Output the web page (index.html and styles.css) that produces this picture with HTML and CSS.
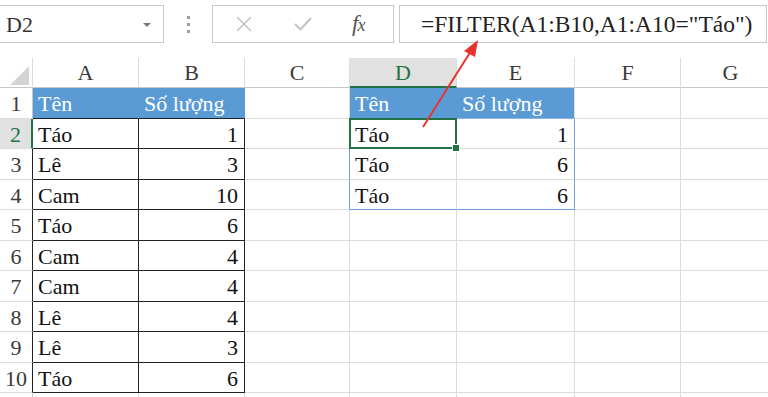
FILE: index.html
```html
<!DOCTYPE html>
<html lang="vi">
<head>
<meta charset="utf-8">
<title>FILTER</title>
<link rel="stylesheet" href="styles.css">
</head>
<body>
<div class="app">
  <div class="fbar">
    <div class="namebox"><span class="nb-text">D2</span><span class="caret"></span></div>
    <div class="dots"><i></i><i></i><i></i></div>
    <div class="fnbox">
      <svg class="ico" width="18" height="18" viewBox="0 0 18 18"><path d="M2 2 L16 16 M16 2 L2 16" stroke="#c4c4c4" stroke-width="1.6" fill="none"/></svg>
      <svg class="ico" width="20" height="18" viewBox="0 0 20 18"><path d="M2 9 L7.5 14.5 L18 3" stroke="#c4c4c4" stroke-width="2.2" fill="none"/></svg>
      <span class="fx">f<span class="x">x</span></span>
    </div>
    <div class="formula">=FILTER(A1:B10,A1:A10="Táo")</div>
  </div>

  <div class="sheet">
    <!-- header row -->
    <div class="c corner"><span class="tri"></span></div>
    <div class="c hdr">A</div>
    <div class="c hdr">B</div>
    <div class="c hdr">C</div>
    <div class="c hdr sel">D</div>
    <div class="c hdr">E</div>
    <div class="c hdr">F</div>
    <div class="c hdr">G</div>
    <!-- row 1 -->
    <div class="c rh">1</div>
    <div class="c blue bkb">Tên</div>
    <div class="c blue bkb">Số lượng</div>
    <div class="c"></div>
    <div class="c blue">Tên</div>
    <div class="c blue bub">Số lượng</div>
    <div class="c"></div>
    <div class="c"></div>
    <!-- row 2 -->
    <div class="c rh rsel">2</div>
    <div class="c bk">Táo</div>
    <div class="c bk num">1</div>
    <div class="c"></div>
    <div class="c active">Táo</div>
    <div class="c num bur">1</div>
    <div class="c"></div>
    <div class="c"></div>
    <!-- row 3 -->
    <div class="c rh bkr">3</div>
    <div class="c bk">Lê</div>
    <div class="c bk num">3</div>
    <div class="c bur"></div>
    <div class="c">Táo</div>
    <div class="c num bur">6</div>
    <div class="c"></div>
    <div class="c"></div>
    <!-- row 4 -->
    <div class="c rh bkr">4</div>
    <div class="c bk">Cam</div>
    <div class="c bk num">10</div>
    <div class="c bur"></div>
    <div class="c bub">Táo</div>
    <div class="c num bur bub">6</div>
    <div class="c"></div>
    <div class="c"></div>
    <!-- row 5 -->
    <div class="c rh bkr">5</div>
    <div class="c bk">Táo</div>
    <div class="c bk num">6</div>
    <div class="c"></div>
    <div class="c"></div>
    <div class="c"></div>
    <div class="c"></div>
    <div class="c"></div>
    <!-- row 6 -->
    <div class="c rh bkr">6</div>
    <div class="c bk">Cam</div>
    <div class="c bk num">4</div>
    <div class="c"></div>
    <div class="c"></div>
    <div class="c"></div>
    <div class="c"></div>
    <div class="c"></div>
    <!-- row 7 -->
    <div class="c rh bkr">7</div>
    <div class="c bk">Cam</div>
    <div class="c bk num">4</div>
    <div class="c"></div>
    <div class="c"></div>
    <div class="c"></div>
    <div class="c"></div>
    <div class="c"></div>
    <!-- row 8 -->
    <div class="c rh bkr">8</div>
    <div class="c bk">Lê</div>
    <div class="c bk num">4</div>
    <div class="c"></div>
    <div class="c"></div>
    <div class="c"></div>
    <div class="c"></div>
    <div class="c"></div>
    <!-- row 9 -->
    <div class="c rh bkr">9</div>
    <div class="c bk">Lê</div>
    <div class="c bk num">3</div>
    <div class="c"></div>
    <div class="c"></div>
    <div class="c"></div>
    <div class="c"></div>
    <div class="c"></div>
    <!-- row 10 -->
    <div class="c rh bkr">10</div>
    <div class="c bk">Táo</div>
    <div class="c bk num">6</div>
    <div class="c"></div>
    <div class="c"></div>
    <div class="c"></div>
    <div class="c"></div>
    <div class="c"></div>
    <!-- row 11 (partial) -->
    <div class="c rh"></div>
    <div class="c"></div>
    <div class="c"></div>
    <div class="c"></div>
    <div class="c"></div>
    <div class="c"></div>
    <div class="c"></div>
    <div class="c"></div>
  </div>

  <svg class="arrow" width="768" height="397" viewBox="0 0 768 397">
    <line x1="423" y1="127" x2="471" y2="51" stroke="#e8332d" stroke-width="2"/>
    <polygon points="478,40 464,51 475,57" fill="#e8332d"/>
  </svg>
</div>
</body>
</html>
```

FILE: styles.css
```css
html, body {
  margin: 0;
  padding: 0;
  background: #fff;
}

.app {
  position: relative;
  width: 768px;
  height: 397px;
  overflow: hidden;
  font-family: "Liberation Serif", "Tinos", "Times New Roman", "DejaVu Serif", serif;
  color: #111;
}

/* ---------- formula bar ---------- */
.fbar {
  display: flex;
  align-items: flex-start;
  height: 58px;
  padding-top: 5px;
  box-sizing: border-box;
}

.namebox {
  margin-left: -2px;
  width: 166px;
  height: 38px;
  box-sizing: border-box;
  border: 1px solid #c9c9c9;
  display: flex;
  align-items: center;
  justify-content: space-between;
  padding: 0 12px 0 7px;
}

.nb-text {
  font-size: 22px;
  color: #333;
  padding-top: 1px;
}

.caret {
  width: 0;
  height: 0;
  border-left: 4px solid transparent;
  border-right: 4px solid transparent;
  border-top: 4px solid #7a7a7a;
  margin-top: 1px;
}

.dots {
  width: 48px;
  height: 38px;
  display: flex;
  flex-direction: column;
  align-items: center;
  justify-content: center;
  gap: 4px;
}

.dots i {
  display: block;
  width: 3px;
  height: 3px;
  background: #a0a0a0;
}

.fnbox {
  width: 182px;
  height: 38px;
  box-sizing: border-box;
  border: 1px solid #c9c9c9;
  display: flex;
  align-items: center;
  padding-left: 20px;
}

.ico {
  display: block;
}

.fnbox .ico:first-child {
  margin-left: 2px;
  margin-right: 40px;
}

.fnbox .ico:nth-child(2) {
  margin-right: 39px;
}

.fx {
  font-style: italic;
  font-size: 23px;
  color: #555;
  letter-spacing: -1px;
}

.fx .x {
  font-size: 18px;
}

.formula {
  margin-left: 5px;
  width: 368px;
  height: 38px;
  box-sizing: border-box;
  border: 1px solid #c9c9c9;
  font-size: 23.5px;
  line-height: 36px;
  padding-left: 21px;
  color: #222;
  white-space: nowrap;
}

/* ---------- sheet grid ---------- */
.sheet {
  display: grid;
  grid-template-columns: 33px 106px 106px 105px 107px 118px 106px 100px;
  grid-template-rows: 30px repeat(10, 30.5px) 20px;
  font-size: 22px;
}

.c {
  box-sizing: border-box;
  border-right: 1px solid #dcdcdc;
  border-bottom: 1px solid #dcdcdc;
  padding: 3px 5px 0 5px;
  line-height: 26px;
  white-space: nowrap;
  overflow: hidden;
  position: relative;
}

.num {
  text-align: right;
  padding-right: 6px;
}

.hdr {
  text-align: center;
  color: #3a3a3a;
  border-bottom-color: #c6c6c6;
  padding-top: 2px;
}

.hdr.sel {
  background: #e1e1e1;
  color: #217346;
  border-bottom: 2px solid #217346;
}

.corner {
  border-bottom-color: #c6c6c6;
  border-right-color: #dcdcdc;
}

.tri {
  position: absolute;
  left: 10px;
  top: 8px;
  width: 0;
  height: 0;
  border-left: 19px solid transparent;
  border-bottom: 19px solid #d4d4d4;
}

.rh {
  text-align: center;
  padding-left: 0;
  padding-right: 0;
  color: #3a3a3a;
  border-right-color: #c6c6c6;
}

.rh.rsel {
  background: #e1e1e1;
  color: #217346;
  border-right: 2px solid #217346;
}

.rh.bkr {
  border-right-color: #222;
}

.blue {
  background: #5b9bd5;
  color: #fff;
  border-right-color: #5b9bd5;
  border-bottom-color: #5b9bd5;
}

.blue.bkb {
  border-bottom-color: #222;
}

.blue.bub {
  border-right-color: #dcdcdc;
  border-bottom-color: #8db4e2;
}

.bk {
  border-right-color: #222;
  border-bottom-color: #222;
}

.bur {
  border-right-color: #6f9fd8;
}

.bub {
  border-bottom-color: #6f9fd8;
}

/* active cell D2 */
.active {
  overflow: visible;
}

.active::after {
  content: "";
  position: absolute;
  left: -1px;
  top: -1px;
  right: -1px;
  bottom: -1px;
  border: 2px solid #217346;
}

.active::before {
  content: "";
  position: absolute;
  right: -4px;
  bottom: -4px;
  width: 6px;
  height: 6px;
  background: #217346;
  border: 1px solid #fff;
  z-index: 2;
}

/* annotation arrow */
.arrow {
  position: absolute;
  left: 0;
  top: 0;
  pointer-events: none;
}
```
